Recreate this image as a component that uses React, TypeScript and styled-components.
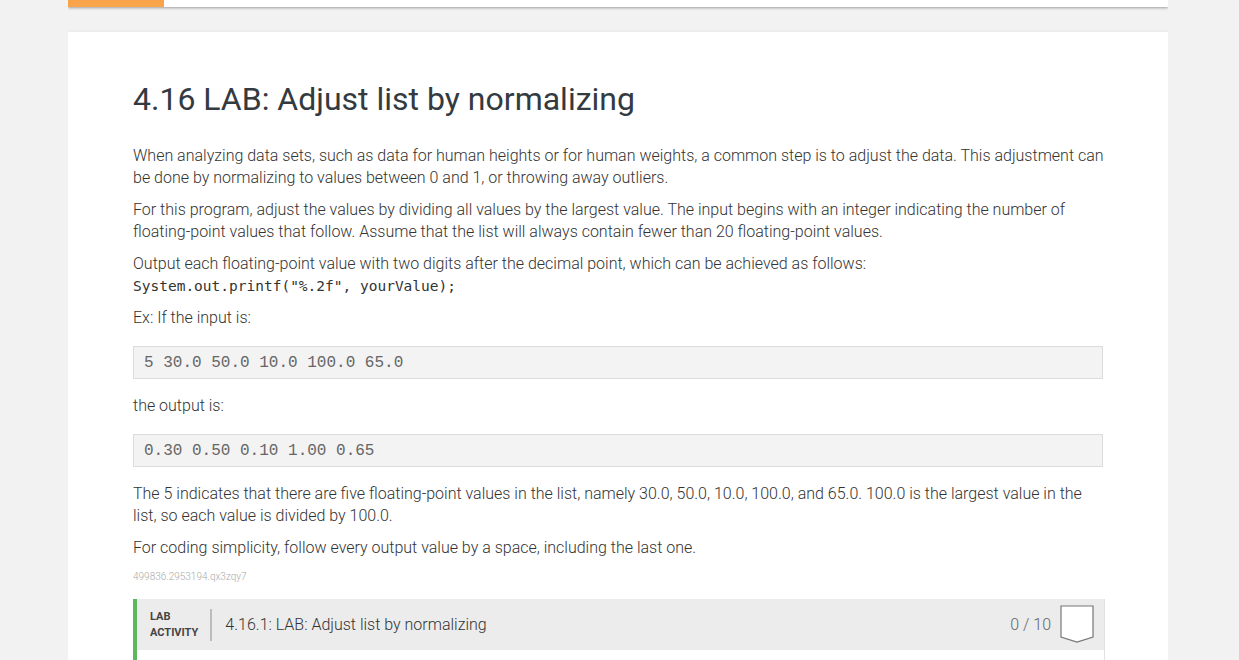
import styled, { createGlobalStyle } from "styled-components"

const Global = createGlobalStyle`
    html, body {
        margin: 0;
        padding: 0;
        background: #f2f2f2;
        font-family: Roboto, "Noto Sans", sans-serif;
        overflow: hidden;
    }
`

const Page = styled.div`
    width: 1100px;
    margin-left: 68px;
    height: 660px;
    overflow: hidden;
`

const TopBar = styled.div`
    height: 7px;
    background: #fff;
    box-shadow: 0 1px 3px rgba(0, 0, 0, .35);
    display: flex;

    .progress{
        width: 96px;
        background: #f9a44a;
    }
`

const Card = styled.div`
    margin-top: 25px;
    background: #fff;
    box-shadow: 0 0 4px rgba(0, 0, 0, .08);
    padding: 47px 65px 40px;
    min-height: 700px;
`

const Title = styled.h1`
    margin: 0 0 26px;
    font-weight: 400;
    font-size: 32px;
    line-height: 40px;
    color: #333a40;
`

const Para = styled.p`
    margin: 0 -3px 10px 0;
    font-weight: 300;
    font-size: 16px;
    line-height: 22px;
    color: #333;

    code{
        font-family: "DejaVu Sans Mono", monospace;
        font-size: 14.5px;
        color: #333;
    }
`

const Pre = styled.pre`
    margin: 17px 0 16px;
    padding: 6px 10px 5px;
    background: #f3f3f3;
    border: 1px solid #dcdcdc;
    font-family: "Liberation Mono", monospace;
    font-size: 16px;
    line-height: 20px;
    color: #666;
`

const Stamp = styled.div`
    margin-top: 12px;
    font-size: 10px;
    font-weight: 300;
    color: #aaa;
`

const Activity = styled.div`
    margin-top: 17px;
    width: 972px;
    box-sizing: border-box;
    border: 1px solid #e2e2e2;
    border-top: none;
    border-left: 4px solid #5cb85c;
    height: 80px;
`

const ActivityHead = styled.div`
    display: flex;
    align-items: center;
    height: 51px;
    background: #ececec;
    padding: 0 10px 0 13px;

    .kind{
        font-size: 11px;
        font-weight: 700;
        line-height: 16px;
        color: #444;
        padding-right: 12px;
        border-right: 2px solid #bdbdbd;
    }
    .name{
        margin-left: 13px;
        font-size: 16px;
        font-weight: 300;
        color: #333;
        flex: 1;
    }
    .score{
        font-size: 16px;
        font-weight: 300;
        color: #666;
        margin-right: 9px;
    }
`

const Badge = () => (
    <svg width="34" height="39" viewBox="0 0 34 39">
        <path d="M1 1 H33 V32 L17 37 L1 32 Z" fill="#fff" stroke="#777" strokeWidth="1.2" />
    </svg>
)

const App = () => {
    return (
        <Page>
            <Global />
            <TopBar><div className="progress"></div></TopBar>
            <Card>
                <Title>4.16 LAB: Adjust list by normalizing</Title>
                <Para>When analyzing data sets, such as data for human heights or for human weights, a common step is to adjust the data. This adjustment can be done by normalizing to values between 0 and 1, or throwing away outliers.</Para>
                <Para>For this program, adjust the values by dividing all values by the largest value. The input begins with an integer indicating the number of floating-point values that follow. Assume that the list will always contain fewer than 20 floating-point values.</Para>
                <Para>Output each floating-point value with two digits after the decimal point, which can be achieved as follows:<br /><code>System.out.printf("%.2f", yourValue);</code></Para>
                <Para>Ex: If the input is:</Para>
                <Pre>5 30.0 50.0 10.0 100.0 65.0</Pre>
                <Para>the output is:</Para>
                <Pre>0.30 0.50 0.10 1.00 0.65</Pre>
                <Para>The 5 indicates that there are five floating-point values in the list, namely 30.0, 50.0, 10.0, 100.0, and 65.0. 100.0 is the largest value in the list, so each value is divided by 100.0.</Para>
                <Para>For coding simplicity, follow every output value by a space, including the last one.</Para>
                <Stamp>499836.2953194.qx3zqy7</Stamp>
                <Activity>
                    <ActivityHead>
                        <div className="kind">LAB<br />ACTIVITY</div>
                        <div className="name">4.16.1: LAB: Adjust list by normalizing</div>
                        <div className="score">0 / 10</div>
                        <Badge />
                    </ActivityHead>
                </Activity>
            </Card>
        </Page>
    )
}

export default App
